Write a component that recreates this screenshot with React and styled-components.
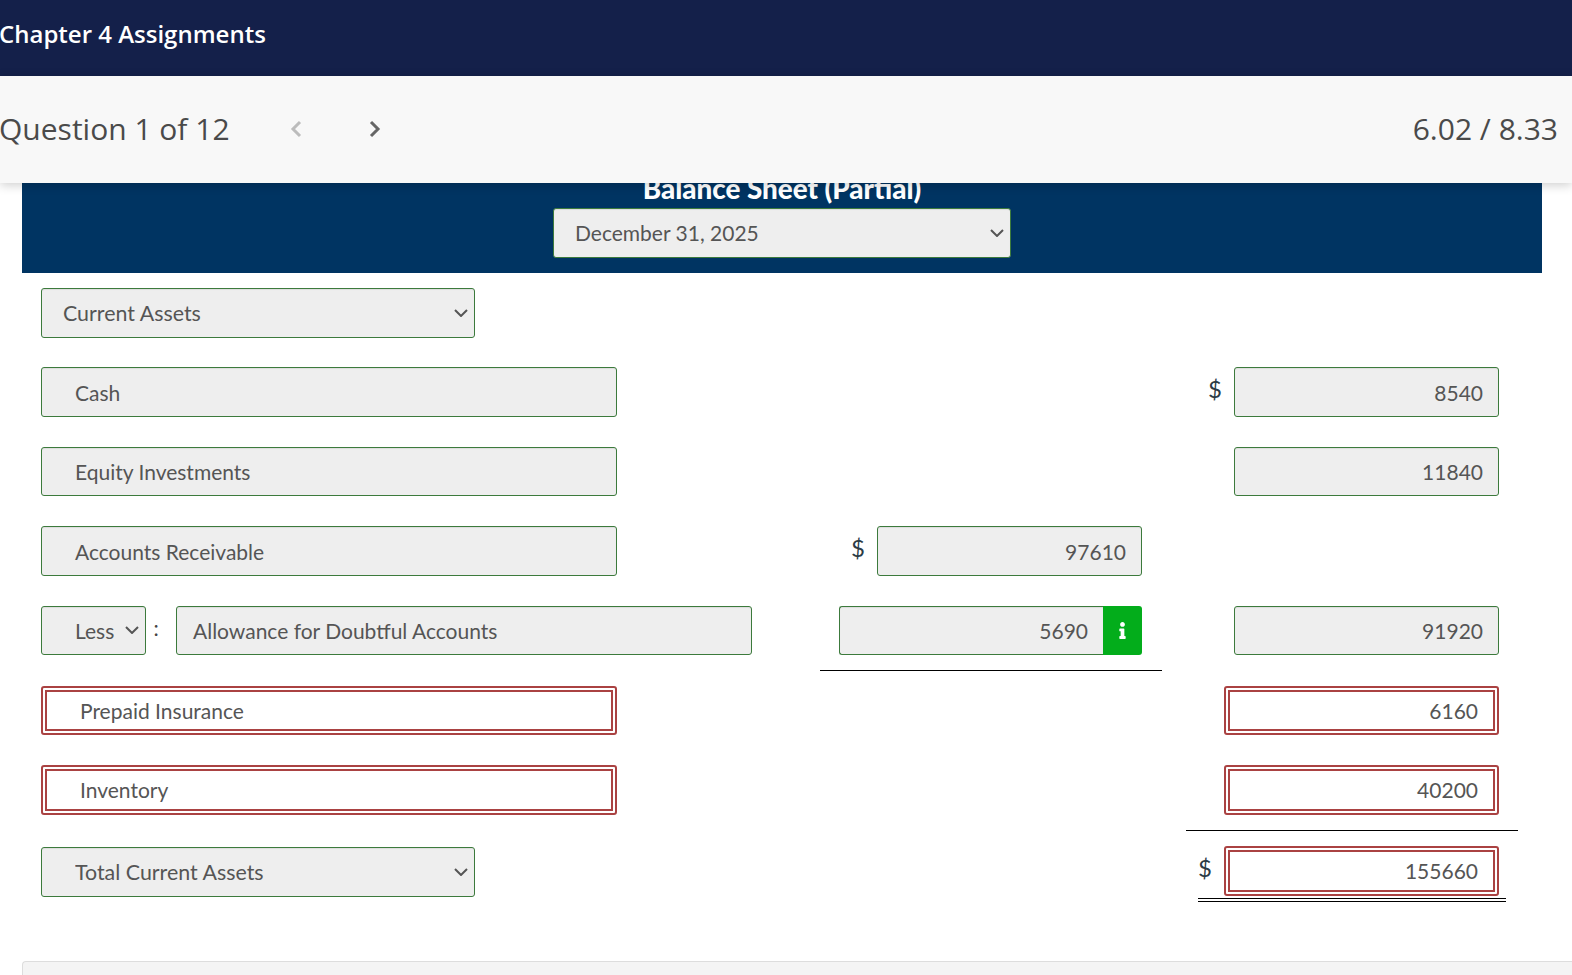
import React from "react";
import styled, { createGlobalStyle } from "styled-components";
import { FaInfo } from "react-icons/fa";

const GlobalStyle = createGlobalStyle`
  html, body {
    margin: 0;
    height: 100%;
    overflow: hidden;
    background: #fff;
  }
  #root {
    height: 100%;
  }
  * {
    box-sizing: border-box;
  }
`;

const chevron =
  "url(\"data:image/svg+xml,%3Csvg xmlns='http://www.w3.org/2000/svg' width='14' height='8' viewBox='0 0 14 8'%3E%3Cpolyline points='1,1 7,7 13,1' fill='none' stroke='%23555' stroke-width='2'/%3E%3C/svg%3E\")";

const Page = styled.div`
  height: 975px;
  display: flex;
  flex-direction: column;
  font-family: Lato, "Liberation Sans", sans-serif;
  color: #555;
  overflow: hidden;
`;

const TopBar = styled.header`
  height: 76px;
  flex: none;
  display: flex;
  align-items: center;
  padding-bottom: 10px;
  background: #14204a;
  color: #fff;
  font-family: "Open Sans", sans-serif;
  font-size: 24px;
  font-weight: 600;
  text-indent: -1px;
`;

const QuestionBar = styled.div`
  height: 107px;
  flex: none;
  display: flex;
  align-items: center;
  padding: 0 14px 2px 0;
  background: #f8f8f8;
  color: #4a4a4a;
  font-family: "Open Sans", sans-serif;
  font-size: 30px;
  box-shadow: 0 2px 10px rgba(0, 0, 0, 0.2);
  position: relative;
  z-index: 2;
`;

const QuestionTitle = styled.div`
  width: 290px;
  text-indent: -1px;
`;

const NavChevron = styled.svg`
  width: 12px;
  height: 18px;
  fill: none;
  stroke: ${({ $off }) => ($off ? "#bcbcbc" : "#666")};
  stroke-width: 3;
  margin-right: ${({ $off }) => ($off ? "67px" : "0")};
`;

const Score = styled.div`
  margin-left: auto;
`;

const SheetHead = styled.div`
  flex: none;
  height: 120px;
  margin: -30px 30px 0 22px;
  padding-top: 20px;
  background: #003462;
  display: flex;
  flex-direction: column;
  align-items: center;
`;

const SheetTitle = styled.div`
  height: 35px;
  line-height: 31px;
  color: #fff;
  font-size: 27.8px;
  font-weight: 900;
`;

const Select = styled.select`
  display: block;
  appearance: none;
  width: ${({ $w }) => $w}px;
  height: 49.7px;
  padding: 0 0 0 ${({ $pad }) => $pad || 21}px;
  flex: none;
  font-family: Lato, "Liberation Sans", sans-serif;
  font-size: ${({ $size }) => $size || 21.4}px;
  color: #555;
  background-color: #eee;
  background-image: ${chevron};
  background-repeat: no-repeat;
  background-position: right 6px center;
  border: 1px solid #3c7a3c;
  border-radius: 3px;
  box-shadow: inset 0 1px 1px rgba(0, 0, 0, 0.075);
`;

const Sheet = styled.div`
  display: grid;
  grid-template-columns: 755px 342px 332px;
  grid-template-rows: repeat(4, 79.4px) 80.2px 79.4px 79.4px 81px;
  column-gap: 24px;
  padding-left: 41px;
`;

const Cell = styled.div`
  grid-column: ${({ $col }) => $col};
  grid-row: ${({ $row }) => $row};
  align-self: start;
  padding: ${({ $top }) => $top || 15}px ${({ $right }) => $right || 0}px
    ${({ $rule }) => $rule || 0}px 0;
  display: flex;
  justify-content: ${({ $end }) => ($end ? "flex-end" : "flex-start")};
  align-items: flex-start;
  gap: 12px;
  border-bottom: ${({ $rule }) => ($rule ? "1px solid #000" : "0")};
`;

const Field = styled.div`
  width: ${({ $w }) => $w}px;
  height: 49.7px;
  flex: none;
  display: flex;
  align-items: center;
  justify-content: ${({ $num }) => ($num ? "flex-end" : "flex-start")};
  padding: ${({ $num, $pad }) => ($num ? "0 15px 0 0" : `0 0 0 ${$pad || 33}px`)};
  font-size: 21px;
  color: #555;
  background: ${({ $bad }) => ($bad ? "#fff" : "#eee")};
  border: ${({ $bad }) => ($bad ? "6px double #aa4242" : "1px solid #3c7a3c")};
  border-radius: 3px;
  box-shadow: ${({ $bad }) =>
    $bad ? "none" : "inset 0 1px 1px rgba(0, 0, 0, 0.075)"};
`;

const Dollar = styled.span`
  font-size: 24px;
  line-height: 44px;
  color: #2d3b45;
`;

const Colon = styled.span`
  width: 20px;
  margin-right: 10px;
  flex: none;
  text-align: center;
  font-size: 21px;
  line-height: 44px;
  color: #444;
`;

const LessGroup = styled.div`
  display: flex;
  align-items: flex-start;
`;

const InputGroup = styled.div`
  width: 303px;
  flex: none;
  height: 49.7px;
  display: flex;
`;

const GroupField = styled(Field)`
  flex: 1;
  width: auto;
  border-right: 0;
  border-radius: 3px 0 0 3px;
`;

const InfoAddon = styled.div`
  width: 39px;
  flex: none;
  display: flex;
  align-items: center;
  justify-content: center;
  background: #03ad1b;
  color: #fff;
  font-size: 17px;
  border-radius: 0 3px 3px 0;
`;

const TotalWrap = styled.div`
  width: 308px;
  flex: none;
  margin-left: 12px;
  padding-right: 7px;
  height: 56px;
  display: flex;
  justify-content: flex-end;
  gap: 12px;
  border-bottom: 4px double #000;
`;

const FooterPanel = styled.div`
  flex: 1;
  margin: 50.4px 0 0 22px;
  background: #f4f4f4;
  border-top: 1px solid #ddd;
  border-left: 1px solid #ddd;
  border-radius: 4px 0 0 0;
`;

export default function App() {
  return (
    <Page>
      <GlobalStyle />
      <TopBar>Chapter 4 Assignments</TopBar>
      <QuestionBar>
        <QuestionTitle>Question 1 of 12</QuestionTitle>
        <NavChevron $off viewBox="0 0 12 18">
          <polyline points="10,2 3,9 10,16" />
        </NavChevron>
        <NavChevron viewBox="0 0 12 18">
          <polyline points="2,2 9,9 2,16" />
        </NavChevron>
        <Score>6.02 / 8.33</Score>
      </QuestionBar>

      <SheetHead>
        <SheetTitle>Balance Sheet (Partial)</SheetTitle>
        <Select $w={458} $size={21}>
          <option>December 31, 2025</option>
        </Select>
      </SheetHead>

      <Sheet>
        <Cell $col={1} $row={1}>
          <Select $w={434}>
            <option>Current Assets</option>
          </Select>
        </Cell>

        <Cell $col={1} $row={2}>
          <Field $w={576}>Cash</Field>
        </Cell>
        <Cell $col={3} $row={2} $end $right={19}>
          <Dollar>$</Dollar>
          <Field $w={265} $num>8540</Field>
        </Cell>

        <Cell $col={1} $row={3}>
          <Field $w={576}>Equity Investments</Field>
        </Cell>
        <Cell $col={3} $row={3} $end $right={19}>
          <Field $w={265} $num>11840</Field>
        </Cell>

        <Cell $col={1} $row={4}>
          <Field $w={576}>Accounts Receivable</Field>
        </Cell>
        <Cell $col={2} $row={4} $end $right={20}>
          <Dollar>$</Dollar>
          <Field $w={265} $num>97610</Field>
        </Cell>

        <Cell $col={1} $row={5}>
          <LessGroup>
            <Select $w={105} $pad={33} $size={21}>
              <option>Less</option>
            </Select>
            <Colon>:</Colon>
            <Field $w={576} $pad={16}>Allowance for Doubtful Accounts</Field>
          </LessGroup>
        </Cell>
        <Cell $col={2} $row={5} $end $right={20} $rule={15}>
          <InputGroup>
            <GroupField $num>5690</GroupField>
            <InfoAddon>
              <FaInfo />
            </InfoAddon>
          </InputGroup>
        </Cell>
        <Cell $col={3} $row={5} $end $right={19}>
          <Field $w={265} $num>91920</Field>
        </Cell>

        <Cell $col={1} $row={6}>
          <Field $w={576} $bad>Prepaid Insurance</Field>
        </Cell>
        <Cell $col={3} $row={6} $end $right={19}>
          <Field $w={275} $num $bad>6160</Field>
        </Cell>

        <Cell $col={1} $row={7}>
          <Field $w={576} $bad>Inventory</Field>
        </Cell>
        <Cell $col={3} $row={7} $end $right={19} $rule={15}>
          <Field $w={275} $num $bad>40200</Field>
        </Cell>

        <Cell $col={1} $row={8} $top={17.5}>
          <Select $w={434} $pad={33}>
            <option>Total Current Assets</option>
          </Select>
        </Cell>
        <Cell $col={3} $row={8} $top={16.5}>
          <TotalWrap>
            <Dollar>$</Dollar>
            <Field $w={275} $num $bad>155660</Field>
          </TotalWrap>
        </Cell>
      </Sheet>

      <FooterPanel />
    </Page>
  );
}
